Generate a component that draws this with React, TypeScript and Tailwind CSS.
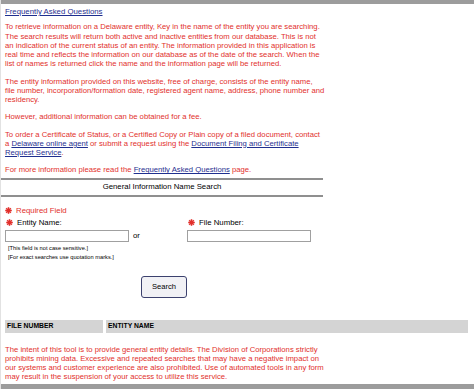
const Star = () => (
  <svg viewBox="0 0 10 10" className="w-[7px] h-[7px] shrink-0" aria-hidden>
    <g stroke="#e2302c" strokeWidth={2.2} strokeLinecap="butt">
      <line x1="5" y1="0.3" x2="5" y2="9.7" />
      <line x1="0.3" y1="5" x2="9.7" y2="5" />
      <line x1="1.7" y1="1.7" x2="8.3" y2="8.3" />
      <line x1="8.3" y1="1.7" x2="1.7" y2="8.3" />
    </g>
  </svg>
);

const A = ({ children }: { children: React.ReactNode }) => (
  <a href="#" className="text-[#1f2f8f] underline">
    {children}
  </a>
);

const App = (): JSX.Element => (
  <div
    className="w-[474px] h-[389px] flex flex-col bg-white overflow-hidden border-l border-[#e2e2e2]"
    style={{ fontFamily: '"Liberation Sans", Arial, sans-serif' }}
  >
    <div className="h-[4px] bg-[#9c9c9c] shrink-0" />

    <div className="px-[4px] text-[7.7px] leading-[9.25px] text-[#e2302c]">
      <div className="mt-[3px] text-[7.8px]">
        <A>Frequently Asked Questions</A>
      </div>

      <div className="w-[340px]">
        <p className="mt-[6px]">
          To retrieve information on a Delaware entity, Key in the name of the entity you are searching.
          <br />
          The search results will return both active and inactive entities from our database. This is not
          <br />
          an indication of the current status of an entity. The information provided in this application is
          <br />
          real time and reflects the information on our database as of the date of the search. When the
          <br />
          list of names is returned click the name and the information page will be returned.
        </p>
        <p className="mt-[8px]">
          The entity information provided on this website, free of charge, consists of the entity name,
          <br />
          file number, incorporation/formation date, registered agent name, address, phone number and
          <br />
          residency.
        </p>
        <p className="mt-[8px]">However, additional information can be obtained for a fee.</p>
        <p className="mt-[8px]">
          To order a Certificate of Status, or a Certified Copy or Plain copy of a filed document, contact
          <br />a <A>Delaware online agent</A> or submit a request using the{" "}
          <A>Document Filing and Certificate</A>
          <br />
          <A>Request Service</A>.
        </p>
        <p className="mt-[8px]">
          For more information please read the <A>Frequently Asked Questions</A> page.
        </p>
      </div>
    </div>

    <div className="w-[322px] mt-[3px]">
      <div className="h-[2px] bg-[#8f8f8f]" />
      <div className="h-[15px] flex items-center justify-center text-[7.8px] text-black">
        General Information Name Search
      </div>
      <div className="h-[2px] bg-[#8f8f8f]" />
    </div>

    <div className="px-[4px] text-[7.8px] text-black">
      <div className="mt-[9px] flex items-center gap-[4px] text-[#e2302c] h-[10px]">
        <Star />
        <span>Required Field</span>
      </div>
      <div className="mt-[2px] flex">
        <div className="flex flex-col">
          <div className="flex items-center gap-[4px] h-[10px] pl-[1px]">
            <Star />
            <span>Entity Name:</span>
          </div>
          <div className="flex items-center mt-[2px]">
            <div className="w-[124px] h-[12px] border border-[#a0a0a0] bg-white" />
            <span className="ml-[4px]">or</span>
          </div>
          <div className="mt-[2px] pl-[3px] text-[5.7px] leading-[9px]">
            <div>[This field is not case sensitive.]</div>
            <div>[For exact searches use quotation marks.]</div>
          </div>
        </div>
        <div className="flex flex-col ml-[47px]">
          <div className="flex items-center gap-[4px] h-[10px] pl-[1px]">
            <Star />
            <span>File Number:</span>
          </div>
          <div className="mt-[2px] w-[124px] h-[12px] border border-[#a0a0a0] bg-white" />
        </div>
      </div>

      <div className="mt-[14px] ml-[136px] w-[46px] h-[22px] flex items-center justify-center rounded-[3px] border border-[#3c416e] bg-[#f1f1f5] text-[7.6px]">
        Search
      </div>
    </div>

    <div className="mt-[22px] px-[4px] flex gap-[3px] h-[13px] text-[6.8px] font-bold text-black">
      <div className="w-[98px] bg-[#d4d4d4] flex items-center pl-[2px]">FILE NUMBER</div>
      <div className="w-[362px] bg-[#d4d4d4] flex items-center pl-[2px]">ENTITY NAME</div>
    </div>

    <p className="mt-[12px] px-[4px] w-[344px] text-[7.7px] leading-[9.25px] text-[#e2302c]">
      The intent of this tool is to provide general entity details. The Division of Corporations strictly
      <br />
      prohibits mining data. Excessive and repeated searches that may have a negative impact on
      <br />
      our systems and customer experience are also prohibited. Use of automated tools in any form
      <br />
      may result in the suspension of your access to utilize this service.
    </p>

    <div className="mt-auto h-[5px] bg-[#9c9c9c] shrink-0" />
  </div>
);

export default App;
